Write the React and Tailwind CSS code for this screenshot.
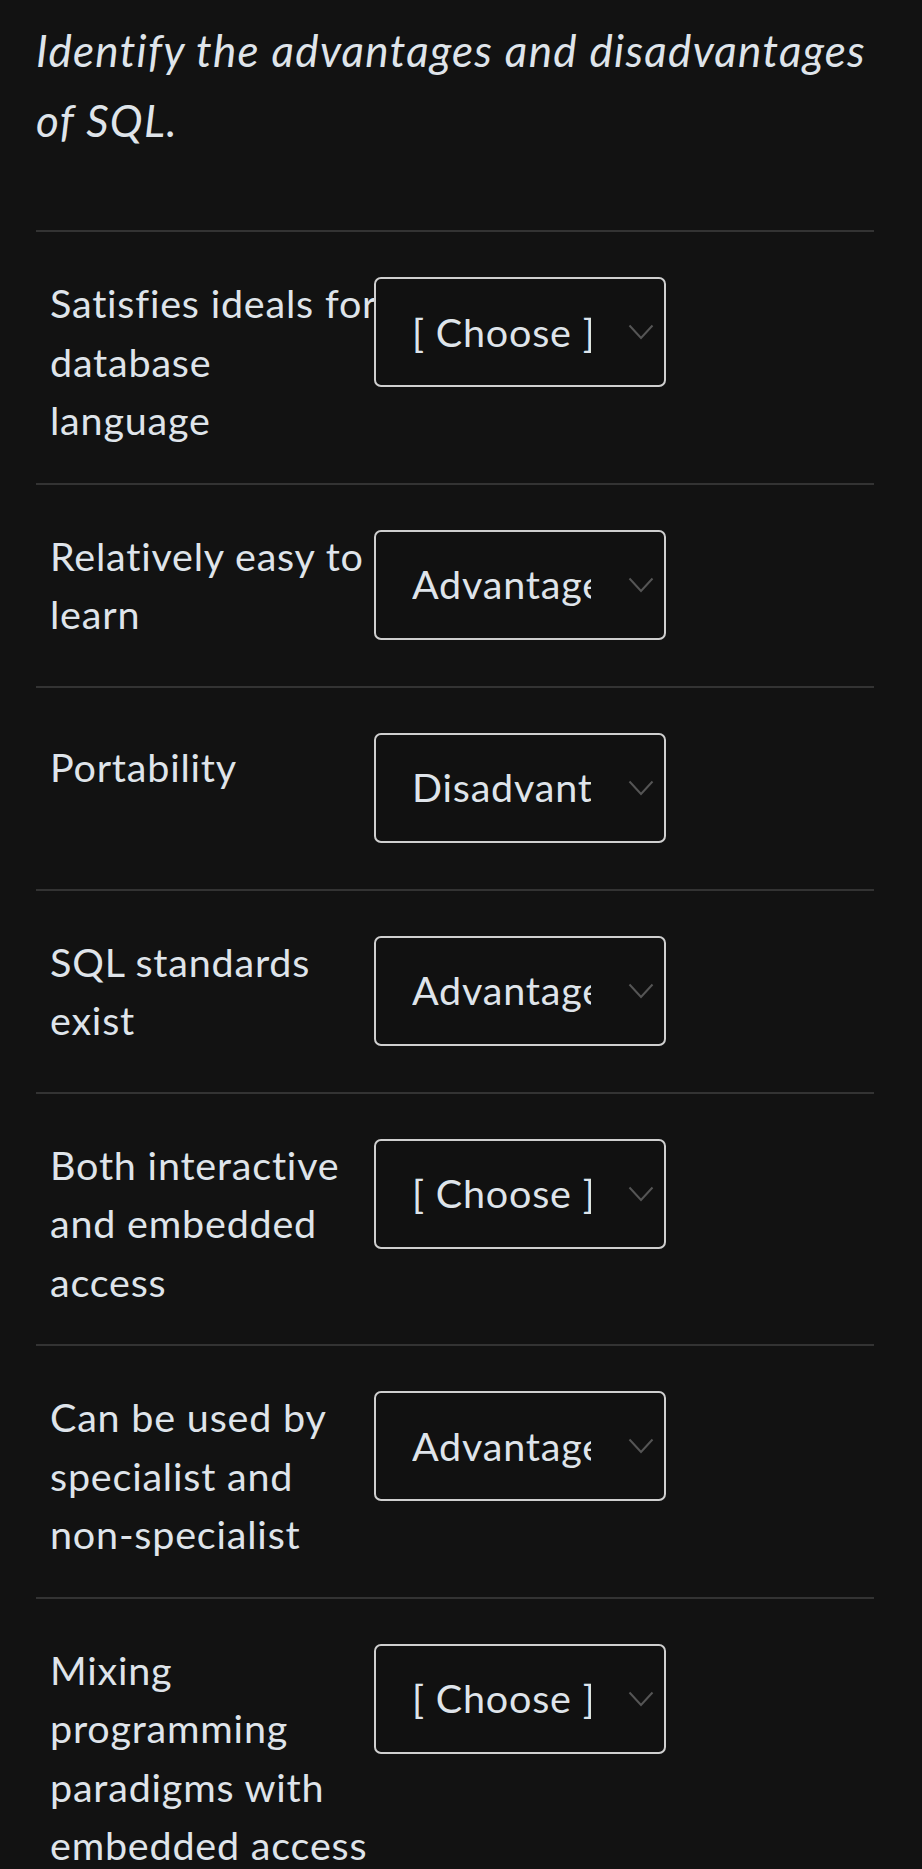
const rows = [
  { label: "Satisfies ideals for database language", value: "[ Choose ]" },
  { label: "Relatively easy to learn", value: "Advantage" },
  { label: "Portability", value: "Disadvantage", single: true },
  { label: "SQL standards exist", value: "Advantage" },
  { label: "Both interactive and embedded access", value: "[ Choose ]" },
  {
    label: (
      <>
        Can be used by specialist and <span className="whitespace-nowrap">non-specialist</span>
      </>
    ),
    value: "Advantage",
  },
  { label: "Mixing programming paradigms with embedded access", value: "[ Choose ]" },
];

function Chevron() {
  return (
    <svg width="26" height="16" viewBox="0 0 26 16" fill="none" className="shrink-0">
      <polyline points="1.5,1.5 13,14 24.5,1.5" stroke="#555555" strokeWidth="2" />
    </svg>
  );
}

function FakeSelect({ value }) {
  return (
    <div className="mt-[3px] mb-[13px] flex h-[110px] w-[292px] shrink-0 items-center rounded-[7px] border-2 border-[#cfcfcf] bg-[#111111] pl-[36px] pr-[10px]">
      <div className="w-[179px] overflow-hidden whitespace-nowrap">{value}</div>
      <div className="ml-auto">
        <Chevron />
      </div>
    </div>
  );
}

export default function App() {
  return (
    <div className="min-h-screen overflow-hidden bg-[#121212] font-['Lato',sans-serif] text-[#dfe4ea]">
      {/* QUESTION */}
      <h1 className="pl-[36px] pr-[40px] pt-[15px] text-[44px] italic leading-[70px] tracking-[1.3px]">
        Identify the advantages and disadvantages of SQL.
      </h1>

      {/* ANSWERS */}
      <div className="mx-[36px] mt-[75px] w-[838px]">
        {rows.map((r, i) => (
          <div
            key={i}
            className="flex items-start border-t-2 border-[#333333] pb-[33px] pl-[14px] pt-[42px] text-[39.5px] leading-[58.5px] tracking-[0.8px]"
          >
            <div className={r.single ? "mt-[8px] w-[327px] shrink-0" : "w-[327px] shrink-0"}>{r.label}</div>
            <div className="-ml-[3px]">
              <FakeSelect value={r.value} />
            </div>
          </div>
        ))}
      </div>
    </div>
  );
}
